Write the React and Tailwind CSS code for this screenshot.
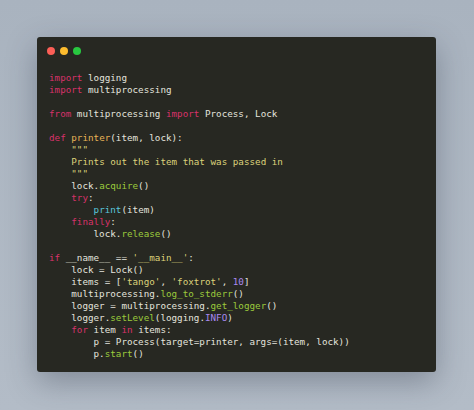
import React from 'react';

const K = ({ children }) => <span className="text-[#d8326a]">{children}</span>;
const S = ({ children }) => <span className="text-[#dcd27a]">{children}</span>;
const F = ({ children }) => <span className="text-[#9ccb3c]">{children}</span>;
const B = ({ children }) => <span className="text-[#5ac6dc]">{children}</span>;
const N = ({ children }) => <span className="text-[#a98af0]">{children}</span>;
const D = ({ children }) => <span className="text-[#e8b456]">{children}</span>;

// each entry is one line of the snippet
const lines = [
  <><K>import</K> logging</>,
  <><K>import</K> multiprocessing</>,
  '',
  <><K>from</K> multiprocessing <K>import</K> Process, Lock</>,
  '',
  <><K>def</K> <D>printer</D>(item, lock):</>,
  <>    <S>"""</S></>,
  <>    <S>Prints out the item that was passed in</S></>,
  <>    <S>"""</S></>,
  <>    lock.<F>acquire</F>()</>,
  <>    <K>try</K>:</>,
  <>        <B>print</B>(item)</>,
  <>    <K>finally</K>:</>,
  <>        lock.<F>release</F>()</>,
  '',
  <><K>if</K> __name__ == <S>'__main__'</S>:</>,
  <>    lock = Lock()</>,
  <>    items = [<S>'tango'</S>, <S>'foxtrot'</S>, <N>10</N>]</>,
  <>    multiprocessing.<F>log_to_stderr</F>()</>,
  <>    logger = multiprocessing.<F>get_logger</F>()</>,
  <>    logger.<F>setLevel</F>(logging.<N>INFO</N>)</>,
  <>    <K>for</K> item <K>in</K> items:</>,
  <>        p = Process(target=printer, args=(item, lock))</>,
  <>        p.<F>start</F>()</>,
];

export default function App() {
  return (
    <div className="w-[474px] h-[410px] bg-gradient-to-b from-[#a9b3bf] to-[#b3bcc7] pt-[37px] pl-[37px]">
      <div className="w-[399px] h-[335px] bg-[#272822] rounded-[3px] shadow-[0_10px_30px_rgba(40,50,65,0.35)] pt-[10px] pl-[10px]">
        <div className="flex gap-[5px]">
          <span className="w-2 h-2 rounded-full bg-[#fc5f57]" />
          <span className="w-2 h-2 rounded-full bg-[#fdbc2e]" />
          <span className="w-2 h-2 rounded-full bg-[#28c840]" />
        </div>
        <pre className="mt-[17px] ml-[2px] font-['DejaVu_Sans_Mono',monospace] text-[9.25px] leading-[12px] text-[#e4e4de]">
          {lines.map((l, i) => (
            <div key={i} className="h-[12px] whitespace-pre">{l}</div>
          ))}
        </pre>
      </div>
    </div>
  );
}
